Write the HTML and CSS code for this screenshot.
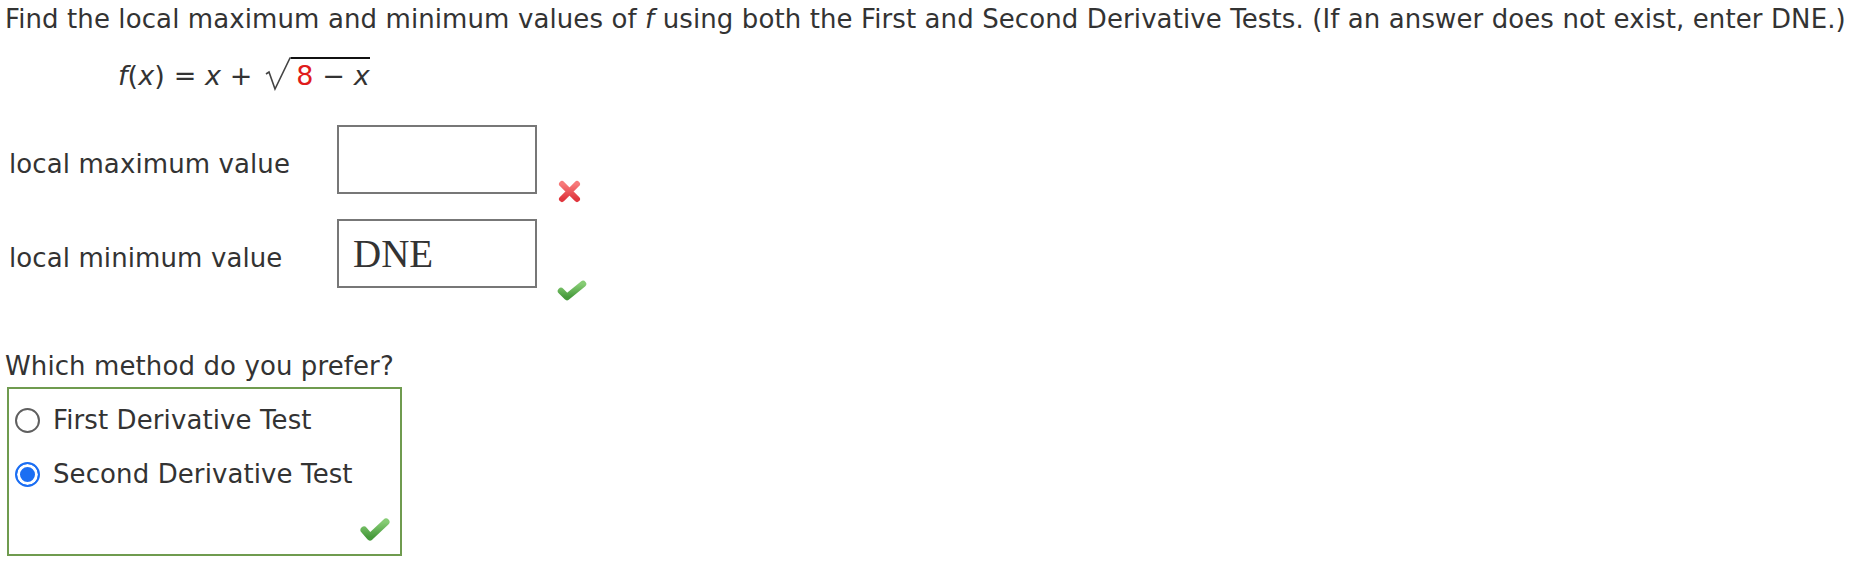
FILE: index.html
```html
<!DOCTYPE html>
<html>
<head>
<meta charset="utf-8">
<link rel="stylesheet" href="styles.css">
</head>
<body>
<div class="page">
  <p class="prompt">Find the local maximum and minimum values of <i>f</i> using both the First and Second Derivative Tests. (If an answer does not exist, enter DNE.)</p>
  <div class="formula"><i>f</i>(<i>x</i>) = <i>x</i> + <span class="sqrt"><svg class="radical" width="26" height="34" viewBox="0 0 26 34"><polyline points="1,17 4,15 10,32 25,1 26,1" fill="none" stroke="#444" stroke-width="1.6" stroke-linejoin="miter"/></svg><span class="radicand"><span class="red">8</span> − <i>x</i></span></span></div>

  <div class="answers">
    <div class="label">local maximum value</div>
    <div class="box"></div>
    <svg class="icon icon-x" width="25" height="25" viewBox="0 0 25 25">
      <defs><linearGradient id="gx" x1="0" y1="0" x2="0" y2="1"><stop offset="0" stop-color="#f77a7a"/><stop offset="1" stop-color="#e0363e"/></linearGradient></defs>
      <path d="M5 5 L20 20 M20 5 L5 20" stroke="url(#gx)" stroke-width="6" stroke-linecap="round" fill="none"/>
    </svg>

    <div class="label">local minimum value</div>
    <div class="box"><span class="value">DNE</span></div>
    <svg class="icon icon-check" width="30" height="22" viewBox="0 0 30 22">
      <defs><linearGradient id="gc" x1="0" y1="0" x2="0" y2="1"><stop offset="0" stop-color="#86cc74"/><stop offset="1" stop-color="#479a3c"/></linearGradient></defs>
      <polyline points="4,11 10,17 26,4" stroke="url(#gc)" stroke-width="6.5" stroke-linecap="round" stroke-linejoin="round" fill="none"/>
    </svg>
  </div>

  <p class="question">Which method do you prefer?</p>
  <div class="choices">
    <div class="choice"><span class="radio"></span><span class="choice-text">First Derivative Test</span></div>
    <div class="choice"><span class="radio checked"></span><span class="choice-text">Second Derivative Test</span></div>
    <div class="choice-mark">
      <svg class="icon-check-lg" width="30" height="25" viewBox="0 0 30 25">
        <defs><linearGradient id="gc2" x1="0" y1="0" x2="0" y2="1"><stop offset="0" stop-color="#86cc74"/><stop offset="1" stop-color="#479a3c"/></linearGradient></defs>
        <polyline points="4,13 10,20 26,5" stroke="url(#gc2)" stroke-width="7" stroke-linecap="round" stroke-linejoin="round" fill="none"/>
      </svg>
    </div>
  </div>
</div>
</body>
</html>
```

FILE: styles.css
```css
html, body {
  margin: 0;
  padding: 0;
  background: #ffffff;
}

.page {
  padding: 3px 0 0 5px;
  font-family: "DejaVu Sans", Verdana, sans-serif;
  font-size: 26px;
  line-height: 32px;
  letter-spacing: 0.1px;
  color: #333333;
}

.prompt {
  margin: 0;
  white-space: nowrap;
}

.formula {
  margin: 22px 0 0 113px;
  font-size: 27px;
  line-height: 38px;
  white-space: nowrap;
}

.sqrt {
  margin-left: 4px;
}

.radical {
  vertical-align: -6px;
}

.radicand {
  border-top: 2px solid #111;
  padding: 1px 0 0 5px;
}

.red {
  color: #e01b1b;
}

.answers {
  margin-top: 30px;
  padding-left: 4px;
  display: grid;
  grid-template-columns: 328px 200px auto;
  row-gap: 25px;
  align-items: start;
}

.label {
  margin-top: 23px;
}

.box {
  box-sizing: border-box;
  height: 69px;
  border: 2px solid #777777;
  background: #fff;
  padding: 4px 0 0 14px;
}

.value {
  font-family: "Liberation Serif", "Times New Roman", serif;
  font-size: 39px;
  line-height: 58px;
  letter-spacing: 0;
  color: #333;
}

.icon {
  display: block;
  margin-left: 20px;
  margin-bottom: -30px;
}

.icon-x {
  margin-top: 54px;
}

.icon-check {
  margin-top: 61px;
}

.question {
  margin: 62px 0 0 0;
}

.choices {
  box-sizing: border-box;
  width: 395px;
  margin-top: 5px;
  margin-left: 2px;
  border: 2px solid #6f9b4f;
  padding: 4px 0 12px 6px;
}

.choice {
  display: flex;
  align-items: center;
  height: 54px;
}

.radio {
  box-sizing: border-box;
  width: 25px;
  height: 25px;
  border-radius: 50%;
  border: 2px solid #5f5f5f;
  background: #fff;
  margin-right: 13px;
  flex: none;
}

.radio.checked {
  border: 2px solid #1b6ef3;
  background: #1b6ef3;
  box-shadow: inset 0 0 0 3px #ffffff;
}

.choice-mark {
  display: flex;
  justify-content: flex-end;
  padding-right: 10px;
  margin-top: 16px;
  height: 25px;
}

.icon-check-lg {
  display: block;
}
```
